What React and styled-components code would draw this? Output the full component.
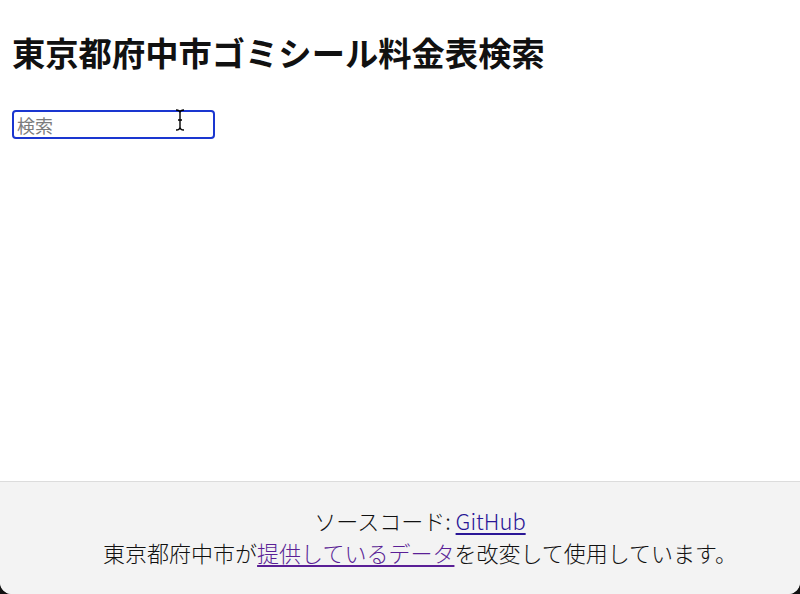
import React from 'react'
import styled, { createGlobalStyle } from 'styled-components'

const GlobalStyle = createGlobalStyle`
  html, body {
    margin: 0;
    padding: 0;
    background: #111;
  }
  #root {
    height: 594px;
  }
`;

const Window = styled.div`
  display: flex;
  flex-direction: column;
  height: 594px;
  background-color: #fff;
  border-radius: 0 0 12px 12px;
  overflow: hidden;
  font-family: "Noto Sans CJK JP", "Noto Sans", sans-serif;
  color: #111;
`;

const Main = styled.main`
  flex: 1;
  padding: 0 12px;
  position: relative;
`;

const Title = styled.h1`
  margin: 28px 0 34px;
  font-size: 33.3px;
  line-height: 48px;
  font-weight: 700;
  letter-spacing: 0;
`;

const SearchBox = styled.input`
  box-sizing: border-box;
  width: 203px;
  height: 29px;
  padding: 0 3px;
  border: 2px solid #1a36d0;
  border-radius: 4px;
  outline: none;
  font-family: "Noto Sans CJK JP", sans-serif;
  font-size: 18px;
  color: #222;
  &::placeholder {
    color: #7c7c7c;
  }
`;

const Cursor = styled.svg`
  position: absolute;
  left: 174px;
  top: 108px;
`;

const Footer = styled.footer`
  display: flex;
  flex-direction: column;
  align-items: center;
  padding: 22px 0 26px 40px;
  background-color: #f3f3f3;
  border-top: 1px solid #dcdcdc;
  font-size: 22px;
  line-height: 32px;
  font-weight: 300;
  color: #111;
`;

const Link = styled.a`
  color: ${p => (p.$visited ? '#5a1f96' : '#2a1696')};
  text-decoration: underline;
  text-underline-offset: 3px;
`;

const App = () => {
  return (
    <>
      <GlobalStyle />
      <Window>
        <Main>
          <Title>東京都府中市ゴミシール料金表検索</Title>
          <SearchBox placeholder="検索" autoFocus />
          <Cursor width="12" height="24" viewBox="0 0 12 24">
            <path d="M2 2 Q6 2 6 5 L6 19 Q6 22 2 22 M10 2 Q6 2 6 5 M6 19 Q6 22 10 22 M4 12 L8 12"
              fill="none" stroke="#000" strokeWidth="1.4" />
          </Cursor>
        </Main>
        <Footer>
          <div>
            ソースコード: <Link href="#">GitHub</Link>
          </div>
          <div>
            東京都府中市が<Link href="#" $visited>提供しているデータ</Link>を改変して使用しています。
          </div>
        </Footer>
      </Window>
    </>
  )
}

export default App
